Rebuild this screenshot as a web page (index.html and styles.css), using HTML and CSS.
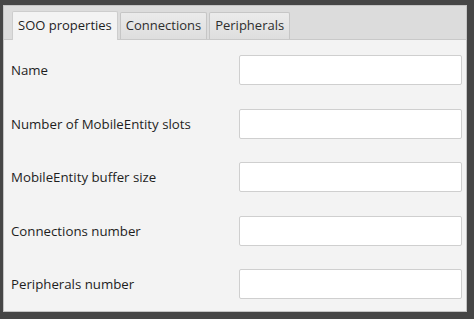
FILE: index.html
```html
<!DOCTYPE html>
<html>
<head>
<meta charset="utf-8">
<link rel="stylesheet" href="styles.css">
</head>
<body>
<div class="panel">
  <div class="tabs">
    <div class="tab active">SOO properties</div>
    <div class="tab">Connections</div>
    <div class="tab">Peripherals</div>
  </div>
  <div class="content">
    <div class="row"><span class="label">Name</span><div class="input"></div></div>
    <div class="row"><span class="label">Number of MobileEntity slots</span><div class="input"></div></div>
    <div class="row"><span class="label">MobileEntity buffer size</span><div class="input"></div></div>
    <div class="row"><span class="label">Connections number</span><div class="input"></div></div>
    <div class="row"><span class="label">Peripherals number</span><div class="input"></div></div>
  </div>
</div>
</body>
</html>
```
FILE: styles.css
```css
html, body {
  margin: 0;
  padding: 0;
  background: #464646;
  width: 474px;
  height: 319px;
  overflow: hidden;
}
body {
  font-family: "Open Sans", "Noto Sans", sans-serif;
  color: #1e1e1e;
  padding-top: 5px;
  padding-left: 3px;
  box-sizing: border-box;
}
.panel {
  width: 464px;
  height: 307px;
  box-sizing: border-box;
  border: 1px solid #c4c4c4;
  background: #f3f3f3;
  display: flex;
  flex-direction: column;
}
.tabs {
  height: 34px;
  background: #dcdcdc;
  display: flex;
  align-items: flex-end;
  padding-left: 8px;
  gap: 2px;
  border-bottom: 1px solid #c9c9c9;
  box-sizing: border-box;
  flex: none;
}
.tab {
  height: 27px;
  box-sizing: border-box;
  padding: 0 5px;
  font-size: 13px;
  line-height: 25px;
  border: 1px solid #c6c6c6;
  border-bottom: none;
  border-radius: 2px 2px 0 0;
  background: linear-gradient(#ebebeb, #dedede);
  color: #2e2e2e;
}
.tab.active {
  height: 29px;
  margin-bottom: -1px;
  background: #f3f3f3;
  border-color: #cdcdcd;
  line-height: 27px;
  color: #1e1e1e;
}
.content {
  padding: 15px 4px 0 7px;
  display: flex;
  flex-direction: column;
}
.row {
  height: 53.5px;
  display: flex;
  justify-content: space-between;
  align-items: flex-start;
  flex: none;
}
.label {
  font-size: 13.25px;
  line-height: 30px;
}
.input {
  width: 223px;
  height: 30px;
  box-sizing: border-box;
  border: 1px solid #cfcfcf;
  border-radius: 2px;
  background: #fff;
}
```
